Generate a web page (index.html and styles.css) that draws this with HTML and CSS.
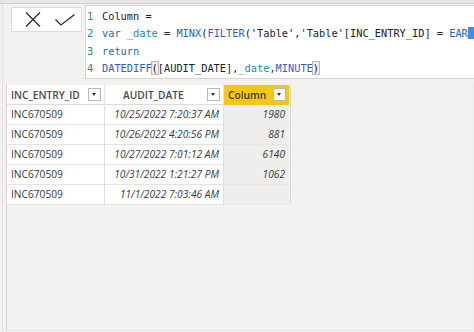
FILE: index.html
```html
<!DOCTYPE html>
<html lang="en">
<head>
    <meta charset="UTF-8">
    <title>Column formula - Data view</title>
    <link rel="stylesheet" href="styles.css">
</head>
<body>
    <div class="topbar"></div>
    <div class="page">
        <div class="formula-row">
            <div class="commit">
                <svg class="icon-x" width="16" height="15" viewBox="0 0 16 15">
                    <path d="M1 0.5 L15 14.5 M15 0.5 L1 14.5" stroke="#2b2b2b" stroke-width="1.3" fill="none"/>
                </svg>
                <svg class="icon-check" width="20" height="12" viewBox="0 0 20 12">
                    <path d="M0.5 5.5 L6 11 L19.5 0.5" stroke="#2b2b2b" stroke-width="1.3" fill="none"/>
                </svg>
            </div>
            <div class="editor">
                <div class="line"><span class="ln">1</span><span class="code">Column =</span></div>
                <div class="line"><span class="ln">2</span><span class="code"><span class="kw">var</span> <span class="vr">_date</span> = <span class="fn">MINX</span>(<span class="fn">FILTER</span>('Table','Table'[INC_ENTRY_ID] = <span class="fn">EAR</span><span class="sel"></span></span></div>
                <div class="line"><span class="ln">3</span><span class="code"><span class="kw">return</span></span></div>
                <div class="line"><span class="ln">4</span><span class="code"><span class="fn">DATEDIFF</span><span class="match">(</span>[AUDIT_DATE],<span class="vr">_date</span>,<span class="fn">MINUTE</span><span class="match">)</span></span></div>
            </div>
        </div>

        <div class="grid-area">
            <div class="table">
                <div class="th"><span>INC_ENTRY_ID</span><span class="dd"></span></div>
                <div class="th th-date"><span>AUDIT_DATE</span><span class="dd"></span></div>
                <div class="th th-calc"><span>Column</span><span class="dd"></span></div>

                <div class="td">INC670509</div>
                <div class="td num">10/25/2022 7:20:37 AM</div>
                <div class="td num calc">1980</div>

                <div class="td">INC670509</div>
                <div class="td num">10/26/2022 4:20:56 PM</div>
                <div class="td num calc">881</div>

                <div class="td">INC670509</div>
                <div class="td num">10/27/2022 7:01:12 AM</div>
                <div class="td num calc">6140</div>

                <div class="td">INC670509</div>
                <div class="td num">10/31/2022 1:21:27 PM</div>
                <div class="td num calc">1062</div>

                <div class="td">INC670509</div>
                <div class="td num">11/1/2022 7:03:46 AM</div>
                <div class="td num calc"></div>
            </div>
        </div>
    </div>
</body>
</html>
```

FILE: styles.css
```css
html, body {
    margin: 0;
    padding: 0;
}
body {
    width: 474px;
    height: 332px;
    overflow: hidden;
    background: #f3f2f1;
    font-family: "Open Sans", "Noto Sans", sans-serif;
    color: #333;
}
.topbar {
    height: 3px;
    background: #e6e6e6;
    border-bottom: 1px solid #cfcfcf;
}
.page {
    margin-left: 2px;
    border-left: 1px solid #e2e1e0;
    height: 328px;
}
.formula-row {
    display: flex;
    align-items: flex-start;
    padding-left: 8px;
    padding-top: 1px;
}
.commit {
    margin-top: 2px;
    width: 56px;
    height: 23px;
    background: #fff;
    border: 1px solid #dcdcdc;
    display: flex;
    align-items: center;
    padding-left: 13px;
    gap: 14px;
}
.icon-check {
    margin-top: 1px;
}
.editor {
    margin-left: 3px;
    flex: 1;
    height: 70px;
    background: #fff;
    border: 1px solid #d6d6d6;
    border-right: none;
    padding-top: 2px;
    overflow: hidden;
    font-family: "DejaVu Sans Mono", "Liberation Mono", monospace;
    font-size: 10.3px;
    line-height: 17.3px;
    color: #222;
}
.line {
    display: flex;
    white-space: pre;
}
.ln {
    flex: none;
    width: 15px;
    padding-left: 1px;
    color: #2a86a0;
}
.code {
    flex: none;
}
.kw {
    color: #1c6fa8;
}
.vr {
    color: #12939c;
}
.fn {
    color: #2d5ec6;
}
.sel {
    display: inline-block;
    width: 7px;
    height: 12px;
    vertical-align: -2px;
    background: #3d8ee8;
}
.match {
    outline: 1px solid #b8b8b8;
    background: #efefef;
}
.grid-area {
    margin: 6px 1px 0 3px;
    height: 245px;
    border-left: 1px solid #d5d4d3;
    border-bottom: 1px solid #e6e5e4;
    border-right: 1px solid #ebeae9;
}
.table {
    display: grid;
    grid-template-columns: 98px 119px 65px;
    width: 283px;
    border-right: 1px solid #d9d9d9;
    font-size: 10.2px;
}
.th {
    height: 19px;
    background: #fff;
    border-bottom: 1px solid #dcdcdc;
    border-right: 1px solid #e3e3e3;
    display: flex;
    align-items: center;
    justify-content: space-between;
    padding: 0 3px 0 4px;
    font-weight: 600;
    color: #4a4a4a;
}
.th-date {
    padding-left: 18px;
}
.th-calc {
    background: #f2c811;
    border-right: none;
    border-bottom-color: #f2c811;
    color: #3a3a3a;
}
.dd {
    position: relative;
    width: 11px;
    height: 11px;
    background: #fff;
    border: 1px solid #b9b9b9;
}
.dd::after {
    content: "";
    position: absolute;
    left: 3px;
    top: 4px;
    border-left: 2.5px solid transparent;
    border-right: 2.5px solid transparent;
    border-top: 3px solid #333;
}
.td {
    height: 19px;
    line-height: 19px;
    background: #fff;
    border-bottom: 1px solid #e3e3e3;
    border-right: 1px solid #e0e0e0;
    padding: 0 4px;
    color: #3a3a3a;
    white-space: nowrap;
}
.num {
    text-align: right;
    font-style: italic;
    padding-right: 4px;
}
.calc {
    background: #efeeed;
    border-right: none;
    border-bottom-color: #e8e7e6;
}
```
